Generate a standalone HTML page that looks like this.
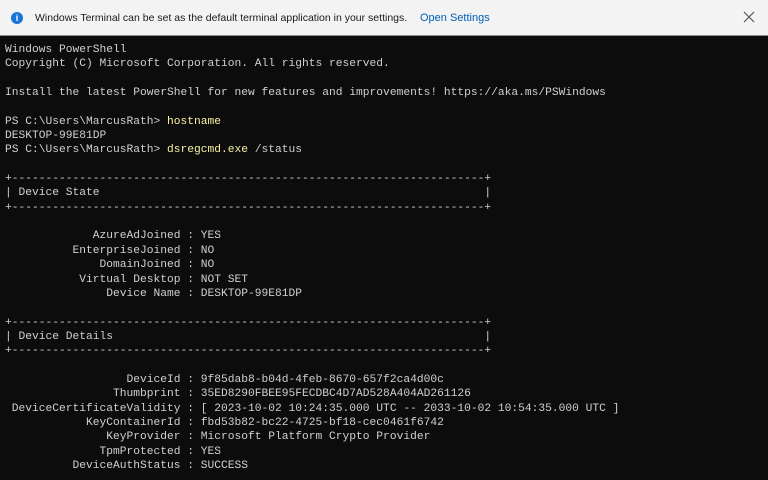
<!DOCTYPE html>
<html><head><meta charset="utf-8"><style>
*{margin:0;padding:0;box-sizing:border-box}
html,body{width:768px;height:480px;overflow:hidden;background:#0c0c0c}
.bar{position:absolute;left:0;top:0;width:768px;height:36px;background:#f3f3f3;border-bottom:1px solid #8a8a8a;font-family:"Liberation Sans",sans-serif;font-size:10.5px;color:#1a1a1a}
.bar .ic{position:absolute;left:11px;top:12px;width:12px;height:12px;border-radius:50%;background:#1a73d9;color:#fff;font-size:9px;font-weight:bold;text-align:center;line-height:12px}
.bar .t{position:absolute;left:35px;top:12px;white-space:nowrap}
.bar .l{position:absolute;left:420px;top:12px;color:#005fb8;white-space:nowrap;font-size:11px}
.bar .x{position:absolute;left:742px;top:10px;width:14px;height:14px}
pre{position:absolute;left:5px;top:43px;font-family:"Liberation Mono",monospace;font-size:11.25px;line-height:14.35px;color:#d0d0d0;white-space:pre}
.y{color:#f9f1a5}
</style></head><body>
<div class="bar"><div class="ic">i</div><div class="t">Windows Terminal can be set as the default terminal application in your settings.</div><div class="l">Open Settings</div>
<svg class="x" viewBox="0 0 14 14"><path d="M2 2L12 12M12 2L2 12" stroke="#555" stroke-width="1.2"/></svg></div>
<pre>Windows PowerShell
Copyright (C) Microsoft Corporation. All rights reserved.

Install the latest PowerShell for new features and improvements! https://aka.ms/PSWindows

PS C:\Users\MarcusRath&gt; <span class="y">hostname</span>
DESKTOP-99E81DP
PS C:\Users\MarcusRath&gt; <span class="y">dsregcmd.exe</span> /status

+----------------------------------------------------------------------+
| Device State                                                         |
+----------------------------------------------------------------------+

             AzureAdJoined : YES
          EnterpriseJoined : NO
              DomainJoined : NO
           Virtual Desktop : NOT SET
               Device Name : DESKTOP-99E81DP

+----------------------------------------------------------------------+
| Device Details                                                       |
+----------------------------------------------------------------------+

                  DeviceId : 9f85dab8-b04d-4feb-8670-657f2ca4d00c
                Thumbprint : 35ED8290FBEE95FECDBC4D7AD528A404AD261126
 DeviceCertificateValidity : [ 2023-10-02 10:24:35.000 UTC -- 2033-10-02 10:54:35.000 UTC ]
            KeyContainerId : fbd53b82-bc22-4725-bf18-cec0461f6742
               KeyProvider : Microsoft Platform Crypto Provider
              TpmProtected : YES
          DeviceAuthStatus : SUCCESS</pre>
</body></html>
